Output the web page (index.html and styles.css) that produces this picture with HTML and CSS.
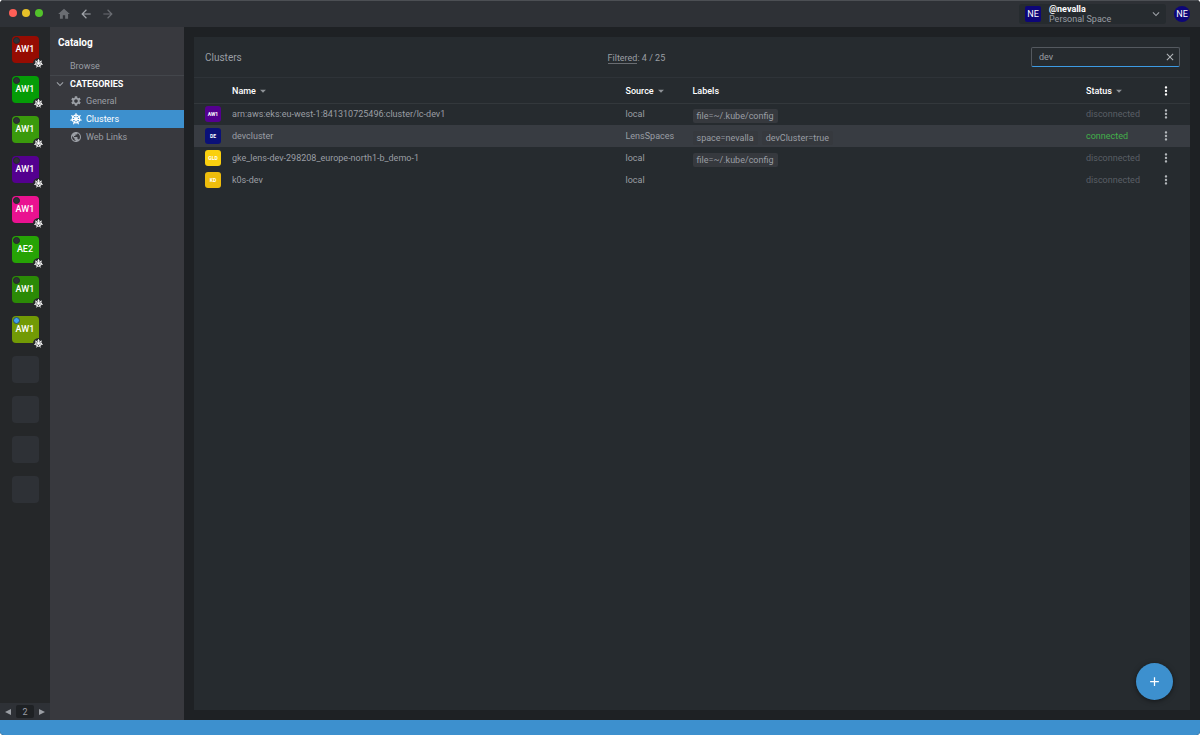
FILE: index.html
```
<!DOCTYPE html>
<html lang="en">
<head>
    <meta charset="UTF-8">
    <meta name="viewport" content="width=device-width, initial-scale=1.0">
    <title>Catalog</title>
    <link rel="stylesheet" href="styles.css">
</head>
<body>
    <svg class="sprite" aria-hidden="true">
        <symbol id="wheel" viewBox="0 0 24 24">
            <g fill="none" stroke="currentColor" stroke-width="2.400" stroke-linecap="round">
                <circle cx="12" cy="12" r="7.6"/>
                <path d="M12 12V1.400M12 12l8.300-6.600M12 12l10.300 2.400M12 12l4.600 9.600M12 12l-4.600 9.600M12 12L1.700 14.400M12 12L3.700 5.400"/>
            </g>
            <circle cx="12" cy="12" r="2.8" fill="currentColor"/>
        </symbol>
        <symbol id="dots" viewBox="0 0 24 24">
            <path fill="currentColor" d="M12 8c1.100 0 2-.9 2-2s-.9-2-2-2-2 .9-2 2 .9 2 2 2zm0 2c-1.100 0-2 .9-2 2s.9 2 2 2 2-.9 2-2-.9-2-2-2zm0 6c-1.100 0-2 .9-2 2s.9 2 2 2 2-.9 2-2-.9-2-2-2z"/>
        </symbol>
        <symbol id="chevron" viewBox="0 0 24 24">
            <path fill="currentColor" d="M7.410 8.590L12 13.170l4.590-4.580L18 10l-6 6-6-6z"/>
        </symbol>
        <symbol id="sort" viewBox="0 0 24 24">
            <path fill="currentColor" d="M7 10l5 5 5-5z"/>
        </symbol>
    </svg>

    <div class="window">
        <header class="topbar">
            <div class="lights">
                <button class="light close" aria-label="Close"></button>
                <button class="light minimize" aria-label="Minimize"></button>
                <button class="light maximize" aria-label="Maximize"></button>
            </div>
            <nav class="history">
                <button class="nav-button dim" aria-label="Home"><svg viewBox="0 0 24 24"><path fill="currentColor" d="M10 20v-6h4v6h5v-8h3L12 3 2 12h3v8z"/></svg></button>
                <button class="nav-button" aria-label="Back"><svg viewBox="0 0 24 24"><path fill="currentColor" d="M20 11H7.830l5.590-5.590L12 4l-8 8 8 8 1.410-1.410L7.830 13H20v-2z"/></svg></button>
                <button class="nav-button dim" aria-label="Forward"><svg viewBox="0 0 24 24"><path fill="currentColor" d="M12 4l-1.410 1.410L16.170 11H4v2h12.170l-5.580 5.590L12 20l8-8z"/></svg></button>
            </nav>
            <button class="space">
                <span class="avatar square">NE</span>
                <span class="space-text">
                    <strong>@nevalla</strong>
                    <span>Personal Space</span>
                </span>
                <svg class="icon"><use href="#chevron"/></svg>
            </button>
            <button class="avatar round">NE</button>
        </header>

        <div class="main">
            <aside class="hotbar">
                <div class="hotbar-items">
                    <button class="cell red">AW1<i class="led"></i><span class="kind"><svg><use href="#wheel"/></svg></span></button>
                    <button class="cell green">AW1<i class="led"></i><span class="kind"><svg><use href="#wheel"/></svg></span></button>
                    <button class="cell leaf">AW1<i class="led"></i><span class="kind"><svg><use href="#wheel"/></svg></span></button>
                    <button class="cell purple">AW1<i class="led"></i><span class="kind"><svg><use href="#wheel"/></svg></span></button>
                    <button class="cell pink">AW1<i class="led"></i><span class="kind"><svg><use href="#wheel"/></svg></span></button>
                    <button class="cell lime">AE2<i class="led"></i><span class="kind"><svg><use href="#wheel"/></svg></span></button>
                    <button class="cell forest">AW1<i class="led"></i><span class="kind"><svg><use href="#wheel"/></svg></span></button>
                    <button class="cell olive">AW1<i class="led on"></i><span class="kind"><svg><use href="#wheel"/></svg></span></button>
                    <div class="cell"></div>
                    <div class="cell"></div>
                    <div class="cell"></div>
                    <div class="cell"></div>
                </div>
                <div class="pager">
                    <button aria-label="Previous"><svg viewBox="0 0 6 6"><path fill="currentColor" d="M6 0v6L0 3z"/></svg></button>
                    <button class="page">2</button>
                    <button aria-label="Next"><svg viewBox="0 0 6 6"><path fill="currentColor" d="M0 0v6l6-3z"/></svg></button>
                </div>
            </aside>

            <nav class="sidebar">
                <h1>Catalog</h1>
                <a class="browse" href="#browse">Browse</a>
                <button class="group"><svg class="icon"><use href="#chevron"/></svg>CATEGORIES</button>
                <a class="category" href="#general">
                    <svg viewBox="0 0 24 24"><path fill="currentColor" d="M19.140 12.940c.04-.3.06-.61.06-.94 0-.32-.02-.64-.07-.94l2.030-1.580c.18-.14.23-.41.12-.61l-1.920-3.320c-.12-.22-.37-.29-.59-.22l-2.390.96c-.5-.38-1.030-.7-1.620-.94l-.36-2.540c-.04-.24-.24-.41-.48-.41h-3.840c-.24 0-.43.17-.47.41l-.36 2.540c-.59.24-1.130.57-1.620.94l-2.390-.96c-.22-.08-.47 0-.59.22L2.740 8.870c-.12.21-.08.47.12.61l2.030 1.580c-.05.3-.09.63-.09.94s.02.64.07.94l-2.030 1.580c-.18.14-.23.41-.12.61l1.920 3.320c.12.22.37.29.59.22l2.390-.96c.5.38 1.030.7 1.620.94l.36 2.540c.05.24.24.41.48.41h3.840c.24 0 .44-.17.47-.41l.36-2.540c.59-.24 1.130-.56 1.620-.94l2.390.96c.22.08.47 0 .59-.22l1.920-3.320c.12-.22.07-.47-.12-.61l-2.010-1.580zM12 15.600c-1.980 0-3.600-1.620-3.600-3.600s1.620-3.600 3.600-3.600 3.600 1.620 3.600 3.600-1.620 3.600-3.600 3.600z"/></svg>
                    General
                </a>
                <a class="category active" href="#clusters"><svg><use href="#wheel"/></svg>Clusters</a>
                <a class="category" href="#web-links">
                    <svg viewBox="0 0 24 24"><path fill="currentColor" d="M12 2C6.480 2 2 6.480 2 12s4.480 10 10 10 10-4.480 10-10S17.520 2 12 2zm-1 17.930c-3.950-.49-7-3.850-7-7.930 0-.62.08-1.210.21-1.790L9 15v1c0 1.100.9 2 2 2v1.930zm6.900-2.540c-.26-.81-1-1.390-1.900-1.390h-1v-3c0-.55-.45-1-1-1H8v-2h2c.55 0 1-.45 1-1V7h2c1.100 0 2-.9 2-2v-.41c2.930 1.190 5 4.060 5 7.410 0 2.080-.8 3.970-2.100 5.390z"/></svg>
                    Web Links
                </a>
            </nav>

            <main class="content">
                <section class="panel">
                    <div class="panel-header">
                        <h2>Clusters</h2>
                        <div class="filtered"><a href="#filtered">Filtered</a>: 4 / 25</div>
                        <div class="search">
                            <input type="text" value="dev" aria-label="Search">
                            <button aria-label="Clear"><svg viewBox="0 0 24 24"><path fill="currentColor" d="M19 6.410L17.590 5 12 10.590 6.410 5 5 6.410 10.590 12 5 17.590 6.410 19 12 13.410 17.590 19 19 17.590 13.410 12z"/></svg></button>
                        </div>
                    </div>
                    <table>
                        <colgroup>
                            <col class="col-icon">
                            <col>
                            <col class="col-source">
                            <col>
                            <col class="col-status">
                            <col class="col-menu">
                        </colgroup>
                        <thead>
                            <tr>
                                <th></th>
                                <th><button>Name<svg class="icon"><use href="#sort"/></svg></button></th>
                                <th><button>Source<svg class="icon"><use href="#sort"/></svg></button></th>
                                <th>Labels</th>
                                <th><button>Status<svg class="icon"><use href="#sort"/></svg></button></th>
                                <th><button class="menu" aria-label="Columns"><svg><use href="#dots"/></svg></button></th>
                            </tr>
                        </thead>
                        <tbody>
                            <tr>
                                <td><span class="badge purple">AW1</span></td>
                                <td>arn:aws:eks:eu-west-1:841310725496:cluster/lc-dev1</td>
                                <td>local</td>
                                <td><div class="labels"><span>file=~/.kube/config</span></div></td>
                                <td class="off">disconnected</td>
                                <td><button class="menu" aria-label="Menu"><svg><use href="#dots"/></svg></button></td>
                            </tr>
                            <tr class="selected">
                                <td><span class="badge navy">DE</span></td>
                                <td>devcluster</td>
                                <td>LensSpaces</td>
                                <td><div class="labels"><span>space=nevalla</span><span>devCluster=true</span></div></td>
                                <td class="connected">connected</td>
                                <td><button class="menu" aria-label="Menu"><svg><use href="#dots"/></svg></button></td>
                            </tr>
                            <tr>
                                <td><span class="badge yellow">GLD</span></td>
                                <td>gke_lens-dev-298208_europe-north1-b_demo-1</td>
                                <td>local</td>
                                <td><div class="labels"><span>file=~/.kube/config</span></div></td>
                                <td class="off">disconnected</td>
                                <td><button class="menu" aria-label="Menu"><svg><use href="#dots"/></svg></button></td>
                            </tr>
                            <tr>
                                <td><span class="badge gold">KD</span></td>
                                <td>k0s-dev</td>
                                <td>local</td>
                                <td></td>
                                <td class="off">disconnected</td>
                                <td><button class="menu" aria-label="Menu"><svg><use href="#dots"/></svg></button></td>
                            </tr>
                        </tbody>
                    </table>
                </section>
                <button class="add" aria-label="Add"><svg viewBox="0 0 24 24"><path fill="currentColor" d="M19 13h-6v6h-2v-6H5v-2h6V5h2v6h6v2z"/></svg></button>
            </main>
        </div>

        <footer class="statusbar"></footer>
    </div>
</body>
</html>
```

FILE: styles.css
```
*,
*::before,
*::after {
    box-sizing: border-box;
    margin: 0;
    padding: 0;
}

body {
    background: #ffffff;
    color: #9a9ea4;
    font-family: Roboto, "Liberation Sans", sans-serif;
    font-size: 9px;
    line-height: 12px;
}

button,
input {
    background: none;
    border: none;
    color: inherit;
    font: inherit;
}

button {
    cursor: pointer;
}

a {
    color: inherit;
    text-decoration: none;
}

svg {
    display: block;
    flex: none;
    height: 12px;
    width: 12px;
}

.icon {
    height: 14px;
    width: 14px;
}

.sprite {
    display: none;
}

.window {
    background: #1e2124;
    border-radius: 4px;
    display: flex;
    flex-direction: column;
    height: 100vh;
    overflow: hidden;
}

/* Top bar */

.topbar {
    align-items: center;
    background: #2e3136;
    border-top: 1px solid #4c4f54;
    display: flex;
    height: 27px;
    padding: 0 10px 0 9px;
}

.lights {
    display: flex;
    gap: 5px;
    padding-bottom: 2px;
}

.light {
    border-radius: 50%;
    height: 8px;
    width: 8px;
}

.close {
    background: #ff5f57;
}

.minimize {
    background: #e6c029;
}

.maximize {
    background: #53c22b;
}

.history {
    display: flex;
    gap: 8px;
    margin-left: 14px;
    margin-right: auto;
}

.nav-button {
    color: #a0a4a9;
}

.nav-button svg {
    height: 14px;
    width: 14px;
}

.dim {
    color: #6a6d72;
}

.space {
    align-items: center;
    background: #262b2f;
    border-radius: 3px;
    display: flex;
    gap: 8px;
    height: 20px;
    margin-right: 8px;
    min-width: 147px;
    padding: 0 3px 0 6px;
    text-align: left;
}

.space-text {
    display: flex;
    flex: 1;
    flex-direction: column;
    line-height: 10px;
}

.space-text strong {
    color: #ffffff;
}

.avatar {
    background: #0d0678;
    color: #ffffff;
    height: 16px;
    line-height: 16px;
    text-align: center;
    width: 16px;
}

.square {
    border-radius: 2px;
}

.round {
    border-radius: 50%;
}

.main {
    display: flex;
    flex: 1;
    min-height: 0;
}

/* Hotbar */

.hotbar {
    background: #252729;
    display: flex;
    flex-direction: column;
    justify-content: space-between;
    width: 50px;
}

.hotbar-items {
    align-items: center;
    display: flex;
    flex-direction: column;
    gap: 13px;
    padding-top: 9px;
}

.cell {
    background: #2e3136;
    border-radius: 4px;
    color: #ffffff;
    font-weight: 500;
    height: 27px;
    line-height: 27px;
    position: relative;
    width: 27px;
}

.led {
    background: #2e3136;
    border: 1px solid #252729;
    border-radius: 50%;
    height: 7px;
    left: 1px;
    position: absolute;
    top: 1px;
    width: 7px;
}

.led.on {
    background: #3fa2f0;
    border-color: #2b4a73;
}

.kind {
    background: #252729;
    border-radius: 50%;
    bottom: -6px;
    padding: 1px;
    position: absolute;
    right: -5px;
}

.kind svg {
    height: 9px;
    width: 9px;
}

.red {
    background: #960c02;
}

.green {
    background: #059c07;
}

.leaf {
    background: #3a9a0c;
}

.purple {
    background: #54008f;
}

.pink {
    background: #ea1290;
}

.lime {
    background: #26a305;
}

.forest {
    background: #2b8a06;
}

.olive {
    background: #729a05;
}

.pager {
    align-items: center;
    background: #2e3136;
    display: flex;
    height: 17px;
    justify-content: space-between;
    padding: 0 5px;
}

.pager svg {
    height: 6px;
    width: 6px;
}

.page {
    background: #1e2124;
    border-radius: 2px;
    height: 13px;
    width: 18px;
}

/* Sidebar */

.sidebar {
    background: #38393e;
    display: flex;
    flex-direction: column;
    width: 134px;
}

.sidebar h1 {
    color: #ffffff;
    font-size: 10px;
    line-height: 12px;
    padding: 10px 8px 8px;
}

.browse {
    border-bottom: 1px solid #43464b;
    line-height: 18px;
    padding-left: 20px;
}

.group {
    align-items: center;
    color: #ffffff;
    display: flex;
    font-weight: 700;
    gap: 3px;
    height: 16px;
    padding-left: 3px;
}

.group svg {
    color: #9a9ea4;
}

.category {
    align-items: center;
    display: flex;
    gap: 4px;
    height: 18px;
    padding-left: 20px;
}

.category.active {
    background: #3d90ce;
    color: #ffffff;
}

/* Content */

.content {
    display: flex;
    flex: 1;
    padding: 10px;
    position: relative;
}

.panel {
    background: #262b2f;
    flex: 1;
}

.panel-header {
    align-items: center;
    border-bottom: 1px solid #2e3338;
    display: flex;
    height: 41px;
    justify-content: space-between;
    padding: 0 10px 0 11px;
}

.panel-header h2 {
    font-size: 10px;
    font-weight: 400;
    padding-top: 2px;
}

.filtered {
    padding-top: 2px;
}

.filtered a {
    border-bottom: 1px solid #6a6d72;
}

.search {
    align-items: center;
    border: 1px solid #54595f;
    border-bottom-color: #3d9be4;
    border-radius: 2px;
    display: flex;
    height: 20px;
    padding: 0 3px 0 7px;
    width: 149px;
}

.search input {
    flex: 1;
    min-width: 0;
    outline: none;
}

.search button {
    color: #b4b8bc;
}

table {
    border-collapse: collapse;
    table-layout: fixed;
    width: 100%;
}

.col-icon {
    width: 38px;
}

.col-source {
    width: 67px;
}

.col-status {
    width: 69px;
}

.col-menu {
    width: 35px;
}

th {
    border-bottom: 1px solid #33383c;
    color: #ffffff;
    font-weight: 500;
    height: 25px;
    padding-top: 2px;
    text-align: left;
}

th button {
    align-items: center;
    display: flex;
}

th .icon {
    color: #8e9297;
}

td {
    height: 22px;
    white-space: nowrap;
}

.selected {
    background: #383c42;
}

.badge {
    border-radius: 3px;
    color: #ffffff;
    display: block;
    font-size: 5px;
    font-weight: 700;
    height: 16px;
    line-height: 16px;
    margin-left: 11px;
    text-align: center;
    width: 16px;
}

.navy {
    background: #0a1078;
}

.yellow {
    background: #fad00f;
}

.gold {
    background: #eebd0c;
}

.labels {
    display: flex;
    gap: 4px;
    padding-top: 4px;
}

.labels span {
    background: #36393e;
    border-radius: 2px;
    line-height: 14px;
    padding: 0 4px;
}

.off {
    color: #5a5f66;
}

.connected {
    color: #43b04a;
}

.menu {
    margin-left: 4px;
}

.menu svg {
    height: 14px;
    width: 14px;
}

th .menu {
    color: #ffffff;
}

td .menu {
    color: #b4b8bc;
    display: block;
}

.add {
    background: #3d90ce;
    border-radius: 50%;
    bottom: 20px;
    box-shadow: 0 1px 5px rgba(0, 0, 0, 0.5);
    color: #ffffff;
    height: 37px;
    position: absolute;
    right: 27px;
    width: 37px;
}

.add svg {
    height: 15px;
    margin: 0 auto;
    width: 15px;
}

.statusbar {
    background: #3d90ce;
    height: 15px;
}
```
